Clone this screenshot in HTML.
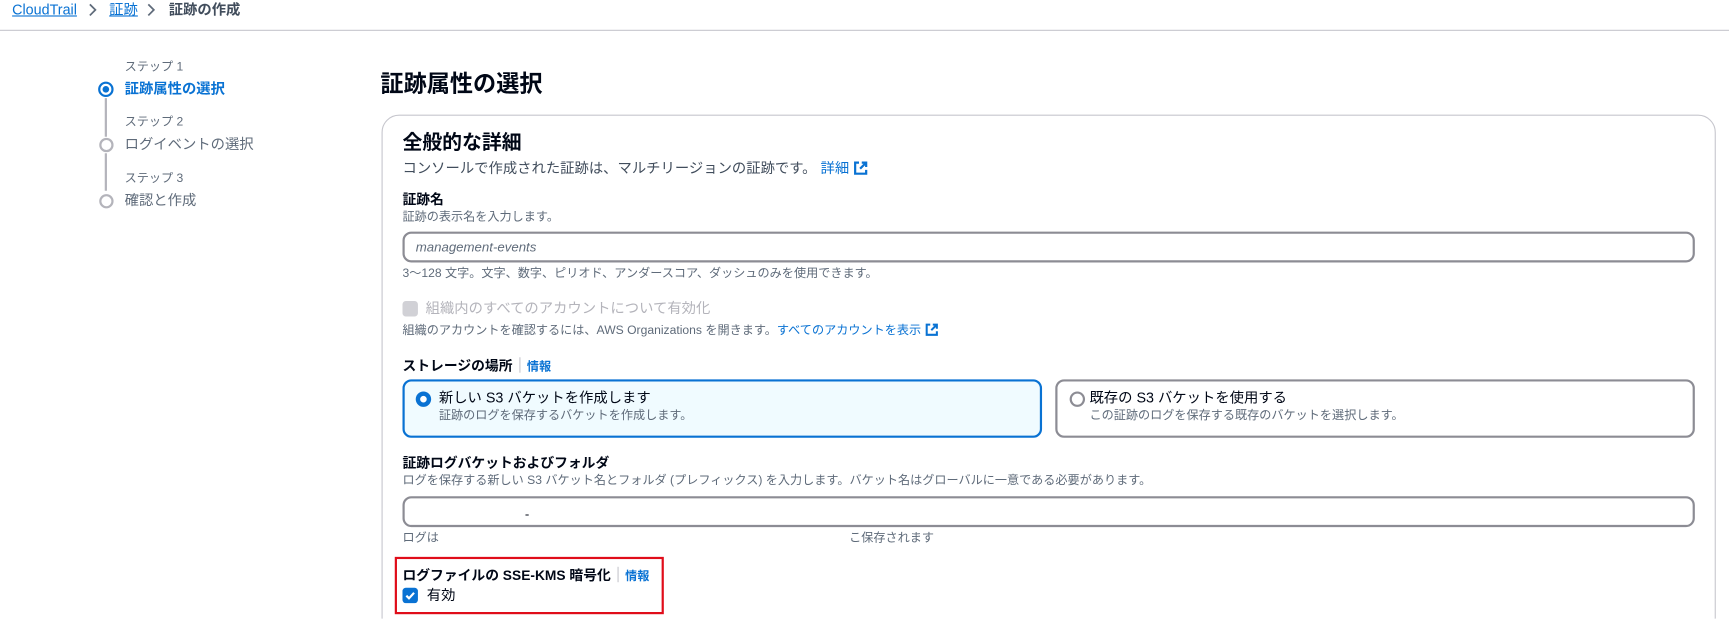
<!DOCTYPE html>
<html><head><meta charset="utf-8"><style>
html,body{margin:0;padding:0;background:#fff;overflow:hidden;width:1729px;height:619px}
#clip{position:relative;width:1729px;height:619px;overflow:hidden}
#w{position:absolute;left:0;top:0;width:1568px;height:561px;overflow:hidden;transform:scale(1.1027);transform-origin:0 0;font-family:"Liberation Sans","Noto Sans CJK JP",sans-serif;color:#000716}
.a{position:absolute;white-space:nowrap;line-height:1}
.s{font-size:11px;color:#5f6b7a}
.b{font-weight:700}
.lnk{color:#0972d3}
.ext{display:inline-block;vertical-align:-2px;margin-left:4px}
.inp{position:absolute;left:365px;width:1168px;height:24px;border:2px solid #8c8c94;border-radius:8px;box-sizing:content-box}
.sep{display:inline-block;width:1px;height:14px;background:#c6c6cd;margin:0 6px;vertical-align:-2px}
</style></head><body><div id="clip"><div id="w">
<div class="a" style="left:11px;top:2px;font-size:13px;color:#0972d3;text-decoration:underline">CloudTrail</div>
<svg style="position:absolute;left:80px;top:3px" width="8" height="12" viewBox="0 0 8 12"><path d="M1.5 1l5 5-5 5" fill="none" stroke="#5f6b7a" stroke-width="1.6"/></svg>
<div class="a" style="left:99px;top:2px;font-size:13px;color:#0972d3;text-decoration:underline">証跡</div>
<svg style="position:absolute;left:133px;top:3px" width="8" height="12" viewBox="0 0 8 12"><path d="M1.5 1l5 5-5 5" fill="none" stroke="#5f6b7a" stroke-width="1.6"/></svg>
<div class="a b" style="left:153px;top:2px;font-size:13px;color:#414d5c">証跡の作成</div>
<div style="position:absolute;left:0;top:27px;width:1568px;height:1px;background:#c6c6cd"></div>

<div class="a s" style="left:113px;top:56px">ステップ 1</div>
<div style="position:absolute;left:89px;top:74px;width:10px;height:10px;border:2px solid #0972d3;border-radius:50%;background:#fff"><div style="position:absolute;left:2px;top:2px;width:6px;height:6px;border-radius:50%;background:#0972d3"></div></div>
<div class="a b" style="left:113px;top:74px;font-size:13px;color:#0972d3">証跡属性の選択</div>
<div style="position:absolute;left:95px;top:89px;width:2px;height:35px;background:#b4b4bb"></div>
<div class="a s" style="left:113px;top:106px">ステップ 2</div>
<div style="position:absolute;left:90px;top:125px;width:9px;height:9px;border:2px solid #b4b4bb;border-radius:50%"></div>
<div class="a" style="left:113px;top:124px;font-size:13px;color:#5f6b7a">ログイベントの選択</div>
<div style="position:absolute;left:95px;top:139px;width:2px;height:34px;background:#b4b4bb"></div>
<div class="a s" style="left:113px;top:157px">ステップ 3</div>
<div style="position:absolute;left:90px;top:176px;width:9px;height:9px;border:2px solid #b4b4bb;border-radius:50%"></div>
<div class="a" style="left:113px;top:175px;font-size:13px;color:#5f6b7a">確認と作成</div>

<div class="a b" style="left:345px;top:66px;font-size:21px">証跡属性の選択</div>

<div style="position:absolute;left:346px;top:104px;width:1208px;height:470px;border:1px solid #c6c6cd;border-radius:16px"></div>
<div class="a b" style="left:365px;top:120px;font-size:18px">全般的な詳細</div>
<div class="a" style="left:365px;top:146px;font-size:13px;color:#414d5c">コンソールで作成された証跡は、マルチリージョンの証跡です。 <span class="lnk">詳細</span><svg class="ext" width="13" height="13" viewBox="0 0 13 13"><path d="M5 1.5H1.5v10h10V8" fill="none" stroke="#0972d3" stroke-width="2"/><path d="M7.5 1.5h4v4M11.5 1.5L6 7" fill="none" stroke="#0972d3" stroke-width="2"/></svg></div>
<div class="a b" style="left:365px;top:175px;font-size:12.5px">証跡名</div>
<div class="a s" style="left:365px;top:192px">証跡の表示名を入力します。</div>
<div class="inp" style="top:210px"></div>
<div class="a" style="left:377px;top:218px;font-size:12px;font-style:italic;color:#5f6b7a">management-events</div>
<div class="a s" style="left:365px;top:243px">3〜128 文字。文字、数字、ピリオド、アンダースコア、ダッシュのみを使用できます。</div>
<div style="position:absolute;left:365px;top:273px;width:14px;height:14px;border-radius:3px;background:#d1d1d6"></div>
<div class="a" style="left:386px;top:273px;font-size:13px;color:#b4b4bb">組織内のすべてのアカウントについて有効化</div>
<div class="a s" style="left:365px;top:293px">組織のアカウントを確認するには、AWS Organizations を開きます。<span class="lnk">すべてのアカウントを表示</span><svg class="ext" width="12" height="12" viewBox="0 0 13 13"><path d="M5 1.5H1.5v10h10V8" fill="none" stroke="#0972d3" stroke-width="2"/><path d="M7.5 1.5h4v4M11.5 1.5L6 7" fill="none" stroke="#0972d3" stroke-width="2"/></svg></div>
<div class="a b" style="left:365px;top:324px;font-size:12.5px">ストレージの場所<span class="sep"></span><span class="lnk" style="font-size:11px">情報</span></div>

<div style="position:absolute;left:365px;top:344px;width:576px;height:49px;border:2px solid #0972d3;border-radius:8px;background:#f0fbff"></div>
<div style="position:absolute;left:377px;top:355px;width:6px;height:6px;border:4px solid #0972d3;border-radius:50%;background:#fff"></div>
<div class="a" style="left:398px;top:354px;font-size:13px">新しい S3 バケットを作成します</div>
<div class="a s" style="left:398px;top:372px">証跡のログを保存するバケットを作成します。</div>
<div style="position:absolute;left:957px;top:344px;width:576px;height:49px;border:2px solid #8c8c94;border-radius:8px"></div>
<div style="position:absolute;left:970px;top:355px;width:10px;height:10px;border:2px solid #8c8c94;border-radius:50%"></div>
<div class="a" style="left:988px;top:354px;font-size:13px">既存の S3 バケットを使用する</div>
<div class="a s" style="left:988px;top:372px">この証跡のログを保存する既存のバケットを選択します。</div>

<div class="a b" style="left:365px;top:414px;font-size:12.5px">証跡ログバケットおよびフォルダ</div>
<div class="a s" style="left:365px;top:431px">ログを保存する新しい S3 バケット名とフォルダ (プレフィックス) を入力します。バケット名はグローバルに一意である必要があります。</div>
<div class="inp" style="top:450px"></div>
<div class="a" style="left:476px;top:460px;font-size:12px">-</div>
<div class="a s" style="left:365px;top:483px">ログは</div>
<div class="a s" style="left:770px;top:483px">こ保存されます</div>

<div style="position:absolute;left:358px;top:505px;width:240px;height:48px;border:2px solid #e00d1a"></div>
<div class="a b" style="left:365px;top:514px;font-size:12.5px">ログファイルの SSE-KMS 暗号化<span class="sep"></span><span class="lnk" style="font-size:11px">情報</span></div>
<div style="position:absolute;left:365px;top:533px;width:14px;height:14px;border-radius:3px;background:#0972d3"><svg width="14" height="14" viewBox="0 0 14 14" style="position:absolute;left:0;top:0"><path d="M3.5 7.2l2.4 2.4 4.6-5" fill="none" stroke="#fff" stroke-width="2"/></svg></div>
<div class="a" style="left:387px;top:533px;font-size:13px">有効</div>
</div></div></body></html>
